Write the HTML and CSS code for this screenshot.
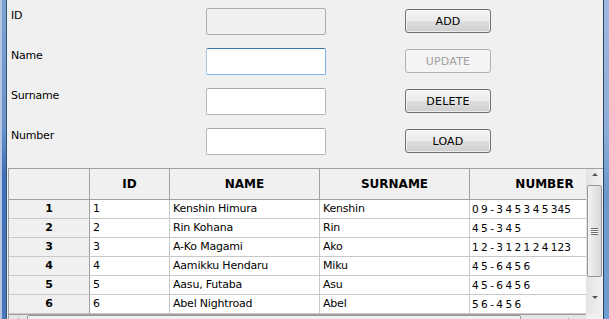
FILE: index.html
```html
<!DOCTYPE html>
<html lang="en">
<head>
    <meta charset="UTF-8">
    <title>Contacts</title>
    <link rel="stylesheet" href="styles.css">
</head>
<body>

    <div class="window">
        <div class="frame-left"></div>

        <div class="content">
            <div class="form">
                <label class="field-label">ID</label>
                <input class="field field-disabled" type="text" disabled>
                <span></span>
                <button class="btn">ADD</button>

                <label class="field-label">Name</label>
                <input class="field field-focus" type="text">
                <span></span>
                <button class="btn" disabled>UPDATE</button>

                <label class="field-label">Surname</label>
                <input class="field" type="text">
                <span></span>
                <button class="btn">DELETE</button>

                <label class="field-label">Number</label>
                <input class="field" type="text">
                <span></span>
                <button class="btn">LOAD</button>
            </div>

            <div class="table-box">
                <div class="table-view">
                    <table class="grid">
                        <thead>
                            <tr>
                                <th class="c-row"></th>
                                <th class="c-id">ID</th>
                                <th class="c-name">NAME</th>
                                <th class="c-surname">SURNAME</th>
                                <th class="c-number">NUMBER</th>
                            </tr>
                        </thead>
                        <tbody>
                            <tr>
                                <th>1</th><td>1</td><td>Kenshin Himura</td><td>Kenshin</td>
                                <td class="num"><span class="sp">09-345345</span>345</td>
                            </tr>
                            <tr>
                                <th>2</th><td>2</td><td>Rin Kohana</td><td>Rin</td>
                                <td class="num"><span class="sp">45-345</span></td>
                            </tr>
                            <tr>
                                <th>3</th><td>3</td><td>A-Ko Magami</td><td>Ako</td>
                                <td class="num"><span class="sp">12-312124</span>123</td>
                            </tr>
                            <tr>
                                <th>4</th><td>4</td><td>Aamikku Hendaru</td><td>Miku</td>
                                <td class="num"><span class="sp">45-6456</span></td>
                            </tr>
                            <tr>
                                <th>5</th><td>5</td><td>Aasu, Futaba</td><td>Asu</td>
                                <td class="num"><span class="sp">45-6456</span></td>
                            </tr>
                            <tr>
                                <th>6</th><td>6</td><td>Abel Nightroad</td><td>Abel</td>
                                <td class="num"><span class="sp">56-456</span></td>
                            </tr>
                        </tbody>
                    </table>
                </div>

                <div class="vscroll">
                    <span class="arrow arrow-up"></span>
                    <div class="vthumb"><span class="grip-h"></span></div>
                    <span class="arrow arrow-down"></span>
                </div>

                <div class="hscroll">
                    <span class="arrow arrow-left"></span>
                    <div class="hthumb"><span class="grip-v"></span></div>
                    <span class="arrow arrow-right"></span>
                </div>
                <div class="corner"></div>
            </div>
        </div>

        <div class="frame-right"></div>
    </div>

</body>
</html>
```

FILE: styles.css
```css
:root {
    --cor-fundo: #f0f0f0;
    --cor-linha: #c8c8c8;
    --cor-cabecalho: #a0a0a0;
    --cor-texto: #000;
}

* {
    margin: 0;
    padding: 0;
    box-sizing: border-box;
    font-family: "DejaVu Sans", Tahoma, sans-serif;
}

body {
    background: var(--cor-fundo);
    color: var(--cor-texto);
    width: 609px;
    height: 319px;
    overflow: hidden;
}

.window {
    display: flex;
    height: 319px;
}

.frame-left {
    width: 7px;
    flex: none;
    background:
        linear-gradient(to right, #b3c7e0 0 2px, transparent 2px 6px, #33527c 6px 7px),
        linear-gradient(to bottom, #7fa2d0 0, #6a93c9 40%, #3f6fb5 55%, #4877bb 100%);
}

.frame-right {
    width: 6px;
    flex: none;
    background:
        linear-gradient(to right, #2b4266 0 1px, transparent 1px),
        linear-gradient(to bottom, #9db9df 0, #8eaed9 40%, #6a9acb 60%, #6f9fd0 100%);
}

.content {
    flex: 1;
    min-width: 0;
    display: flex;
    flex-direction: column;
}

/* formulario */
.form {
    display: grid;
    grid-template-columns: 195px 120px 79px 86px;
    grid-auto-rows: 40px;
    padding: 8px 0 0 4px;
}

.field-label {
    font-size: 11px;
    line-height: 14px;
    margin-top: 1px;
    letter-spacing: -0.2px;
}

.field {
    height: 27px;
    border: 1px solid #b5b5b5;
    border-top-color: #ababab;
    border-radius: 2px;
    background: #fff;
    outline: none;
}

.field-disabled {
    background: #f0f0f0;
    border-color: #adadad;
}

.field-focus {
    border-color: #7eb4ea;
    border-top-color: #3d7bad;
    border-left-color: #a8c8e8;
}

.btn {
    height: 24px;
    margin-top: 1px;
    border: 1px solid #707070;
    border-radius: 3px;
    background: linear-gradient(to bottom, #f2f2f2 0, #ebebeb 48%, #dddddd 52%, #cfcfcf 100%);
    box-shadow: inset 0 0 0 1px rgba(255, 255, 255, 0.6);
    font-size: 11px;
    letter-spacing: 0.2px;
    color: #000;
}

.btn:disabled {
    border-color: #adb2b5;
    background: #f4f4f4;
    box-shadow: none;
    color: #a0a0a0;
}

/* tabela */
.table-box {
    margin-left: 1px;
    display: grid;
    grid-template-columns: 1fr 17px;
    grid-template-rows: 146px 1fr;
}

.table-view {
    overflow: hidden;
    border-top: 1px solid #a0a0a0;
    border-left: 1px solid #a0a0a0;
    background: #fff;
}

.grid {
    border-collapse: separate;
    border-spacing: 0;
    table-layout: fixed;
    width: 611px;
}

.grid th, .grid td {
    border-right: 1px solid var(--cor-linha);
    border-bottom: 1px solid var(--cor-linha);
    font-size: 11px;
    height: 19px;
    line-height: 18px;
    white-space: nowrap;
    overflow: hidden;
}

.grid thead th {
    height: 31px;
    background: #f0f0f0;
    border-color: var(--cor-cabecalho);
    font-size: 12px;
    font-weight: bold;
    text-align: center;
}

.grid tbody th {
    background: #f0f0f0;
    border-right-color: var(--cor-cabecalho);
    font-weight: bold;
    text-align: center;
}

.grid td {
    padding: 0 3px;
    letter-spacing: -0.2px;
}

.c-row { width: 81px; }
.c-id { width: 80px; }
.c-name { width: 150px; }
.c-surname { width: 150px; }
.c-number { width: 150px; }

.grid td.num {
    padding-left: 2px;
    font-size: 10.5px;
    letter-spacing: 0;
}

.num .sp {
    letter-spacing: 2.4px;
}

/* barras de rolagem */
.vscroll {
    border-top: 1px solid #a0a0a0;
    background: linear-gradient(to right, #e3e3e3, #f2f2f2);
    display: flex;
    flex-direction: column;
    align-items: center;
    padding-top: 4px;
}

.vthumb {
    width: 15px;
    height: 92px;
    margin: 9px 0 19px;
    border: 1px solid #979797;
    border-radius: 2px;
    background: linear-gradient(to right, #f3f3f3, #e5e5e5 50%, #d9d9d9);
    display: flex;
    align-items: center;
    justify-content: center;
}

.grip-h {
    width: 7px;
    height: 7px;
    background: repeating-linear-gradient(to bottom, #6c6c6c 0 1px, #f7f7f7 1px 2px);
}

.arrow {
    width: 0;
    height: 0;
    border: 3px solid transparent;
}

.arrow-up {
    border-bottom: 3px solid #565656;
    border-top: none;
}

.arrow-down {
    border-top: 3px solid #565656;
    border-bottom: none;
}

.hscroll {
    border-top: 1px solid #a0a0a0;
    border-left: 1px solid #a0a0a0;
    background: linear-gradient(to bottom, #e3e3e3, #f2f2f2);
    display: flex;
    align-items: flex-start;
    padding-left: 7px;
}

.arrow-left {
    margin-top: 3px;
    border-right: 3px solid #565656;
    border-left: none;
}

.arrow-right {
    margin: 3px 0 0 47px;
    border-left: 3px solid #565656;
    border-right: none;
}

.hthumb {
    width: 494px;
    height: 16px;
    margin-left: 8px;
    border: 1px solid #979797;
    border-radius: 2px;
    background: linear-gradient(to bottom, #f3f3f3, #e5e5e5 50%, #d9d9d9);
    display: flex;
    justify-content: center;
    padding-top: 3px;
}

.grip-v {
    width: 7px;
    height: 7px;
    background: repeating-linear-gradient(to right, #6c6c6c 0 1px, #f7f7f7 1px 2px);
}

.corner {
    background: #f0f0f0;
}
```
